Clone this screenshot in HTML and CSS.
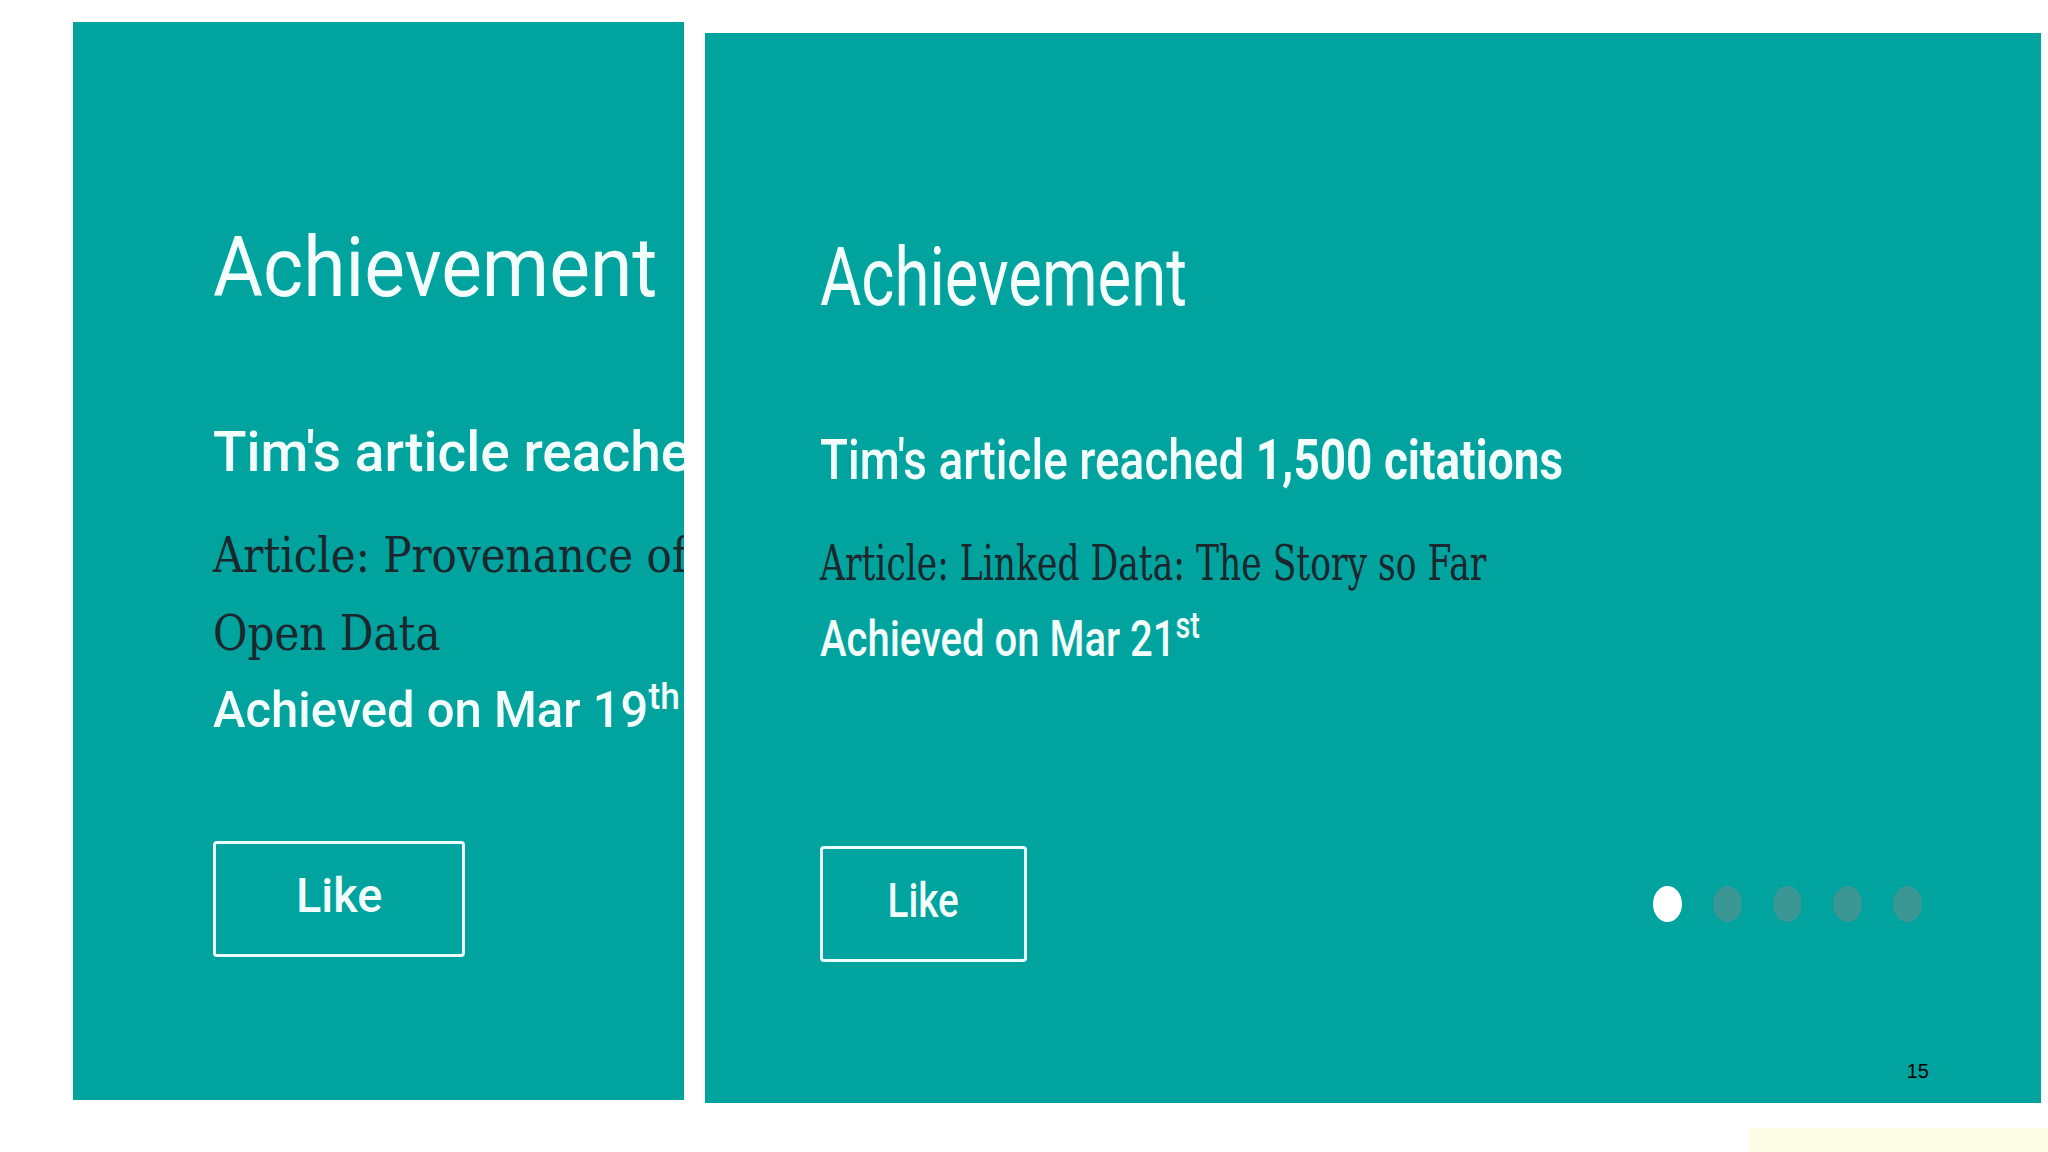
FILE: index.html
```html
<!DOCTYPE html>
<html lang="en">
<head>
<meta charset="utf-8">
<title>Achievements</title>
<link rel="stylesheet" href="styles.css">
</head>
<body>
<div class="stage">
  <section class="card card-left">
    <h1 class="title">Achievement</h1>
    <p class="sub">Tim's article reached</p>
    <p class="article">Article: Provenance of<br>Open Data</p>
    <p class="date">Achieved on Mar 19<sup>th</sup></p>
    <div class="actions">
      <button class="like" type="button"><span>Like</span></button>
    </div>
  </section>
  <section class="card card-right">
    <h1 class="title">Achievement</h1>
    <p class="sub">Tim's article reached <b>1,500 citations</b></p>
    <p class="article">Article: Linked Data: The Story so Far</p>
    <p class="date">Achieved on Mar 21<sup>st</sup></p>
    <div class="actions">
      <button class="like" type="button"><span>Like</span></button>
      <div class="dots">
        <span class="dot on"></span>
        <span class="dot"></span>
        <span class="dot"></span>
        <span class="dot"></span>
        <span class="dot"></span>
      </div>
    </div>
    <div class="page-num">15</div>
  </section>
</div>
<div class="note-strip"></div>
</body>
</html>
```
FILE: styles.css
```css
html, body {
  margin: 0;
  background: #ffffff;
}
body {
  width: 2048px;
  height: 1152px;
  overflow: hidden;
  font-family: Roboto, "Liberation Sans", sans-serif;
}
.stage {
  display: flex;
  align-items: flex-start;
  gap: 21px;
  padding: 22px 0 0 73px;
}
.card {
  box-sizing: border-box;
  background: #00a39e;
  color: #f2fdfc;
  overflow: hidden;
  white-space: nowrap;
}
.card-left {
  width: 611px;
  height: 1078px;
  padding: 196px 0 0 140px;
}
.card-right {
  width: 1336px;
  height: 1070px;
  margin-top: 11px;
  padding: 194px 119px 0 115px;
}
.title {
  margin: 0;
  font-size: 83px;
  line-height: 100px;
  font-weight: 400;
  transform-origin: left center;
  transform: scaleX(0.925);
}
.card-right .title {
  font-size: 82px;
  transform: scaleX(0.773);
}
.sub {
  margin: 99px 0 0;
  font-size: 55px;
  line-height: 70px;
  font-weight: 500;
  transform-origin: left center;
}
.card-right .sub {
  margin-top: 98px;
  transform: scaleX(0.835);
}
.sub b {
  font-weight: 700;
}
.article {
  margin: 29px 0 0;
  font-family: "DejaVu Serif", "Liberation Serif", serif;
  font-size: 48px;
  line-height: 78px;
  color: #1c272d;
  transform-origin: left center;
  transform: scaleX(0.876);
}
.card-right .article {
  margin-top: 33px;
  font-size: 49px;
  line-height: 72px;
  transform: scaleX(0.705);
}
.date {
  margin: 8px 0 0;
  font-size: 50px;
  line-height: 60px;
  font-weight: 500;
  transform-origin: left center;
  transform: scaleX(0.98);
}
.card-right .date {
  margin-top: 9px;
  transform: scaleX(0.8);
}
.date sup {
  font-size: 36px;
  line-height: 0;
  vertical-align: 18px;
}
.actions {
  display: flex;
  align-items: center;
  justify-content: space-between;
}
.card-left .actions {
  margin-top: 101px;
}
.card-right .actions {
  margin-top: 177px;
}
.like {
  box-sizing: border-box;
  width: 252px;
  height: 116px;
  margin: 0;
  padding: 0 0 6px;
  border: 3px solid #eafcfb;
  border-radius: 4px;
  background: transparent;
  color: #f2fdfc;
  font: 500 49px/104px Roboto, "Liberation Sans", sans-serif;
}
.card-right .like {
  width: 207px;
}
.like span {
  display: inline-block;
  transform: scaleX(0.955);
}
.card-right .like span {
  transform: scaleX(0.79);
}
.dots {
  display: flex;
  gap: 31px;
}
.dot {
  width: 29px;
  height: 36px;
  border-radius: 50%;
  background: #3b9794;
}
.dot.on {
  background: #ffffff;
}
.page-num {
  margin: 99px -7px 0 0;
  text-align: right;
  font: 20px/20px "Liberation Sans", Arial, sans-serif;
  color: #000000;
}
.note-strip {
  margin: 25px 0 0 1749px;
  width: 299px;
  height: 24px;
  background: #fdfde6;
}
```
